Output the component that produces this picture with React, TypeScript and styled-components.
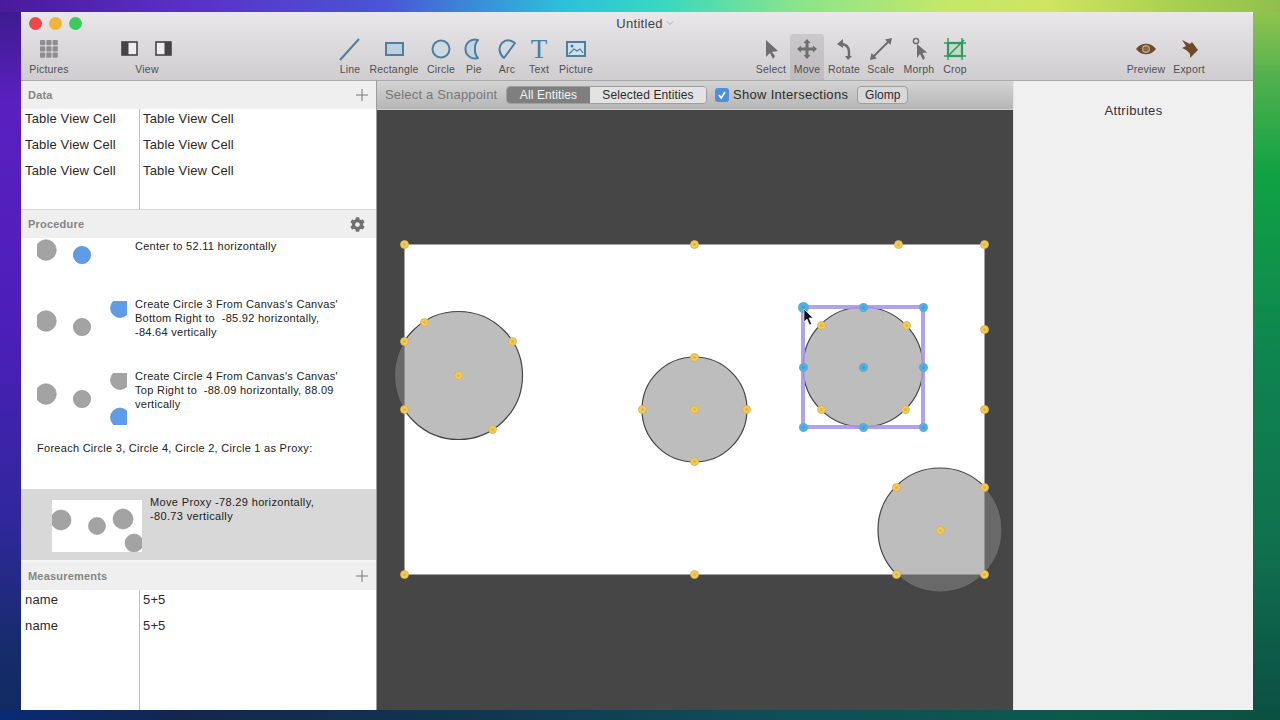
import React from "react";
import styled, { createGlobalStyle } from "styled-components";
import { FaCog } from "react-icons/fa";

const Global = createGlobalStyle`
  html, body { margin: 0; padding: 0; width: 1280px; height: 720px; overflow: hidden; }
  body { font-family: "Liberation Sans", Arial, sans-serif; }
`;

const Desktop = styled.div`
  width: 1280px;
  height: 720px;
  box-sizing: border-box;
  padding: 12px 27px 10px 21px;
  background:
    linear-gradient(90deg, #4a1a9c 0%, #5a30c8 15%, #4a55d6 30%, #2cc0dc 44%, #3ad8c0 52%, #88e48c 62%, #c4e868 74%, #d0e460 82%, #a8d050 92%, #90c04c 100%) top / 100% 12px no-repeat,
    linear-gradient(90deg, #0a2a78 0%, #14264e 14%, #12344e 36%, #0e4c58 58%, #0c5a4c 85%, #0a5040 100%) bottom / 100% 10px no-repeat,
    linear-gradient(180deg, #3a1a88 0%, #5a20c0 14%, #4c1eba 45%, #30279c 72%, #162c6c 90%, #0f2a60 100%) left / 21px 100% no-repeat,
    linear-gradient(180deg, #9cc84e 0%, #50b04e 11%, #10a244 24%, #0e8450 50%, #10704e 76%, #0b4e44 100%) right / 27px 100% no-repeat;
`;

const Window = styled.div`
  height: 100%;
  display: flex;
  flex-direction: column;
  border-radius: 5px 5px 3px 3px;
  overflow: hidden;
  background: #f0f0f0;
`;

const Chrome = styled.div`
  height: 68px;
  flex: none;
  display: flex;
  flex-direction: column;
  background: linear-gradient(180deg, #e9e7e9 0%, #dddbdd 45%, #cfcdcf 100%);
  border-bottom: 1px solid #a9a9a9;
`;

const TitleRow = styled.div`
  height: 22px;
  flex: none;
  display: flex;
  align-items: center;
  padding-left: 8px;
`;

const Light = styled.span<{ $c: string }>`
  width: 13px;
  height: 13px;
  margin-right: 7px;
  border-radius: 50%;
  background: ${(p) => p.$c};
`;

const Title = styled.div`
  flex: 1;
  display: flex;
  justify-content: center;
  align-items: center;
  gap: 3px;
  font-size: 13px;
  color: #444;
  padding-right: 52px;
  box-sizing: border-box;
  letter-spacing: 0.3px;
`;

const ToolRow = styled.div`
  flex: 1;
  display: flex;
  align-items: stretch;
`;

const Tool = styled.div<{ $w: number; $on?: boolean; $ml?: number }>`
  width: ${(p) => p.$w}px;
  margin-left: ${(p) => p.$ml ?? 0}px;
  flex: none;
  display: flex;
  flex-direction: column;
  align-items: center;
  background: ${(p) => (p.$on ? "rgba(120,120,120,.2)" : "transparent")};
  border-radius: 3px 3px 0 0;
`;

const IconSlot = styled.div`
  height: 30px;
  display: flex;
  align-items: center;
  justify-content: center;
  gap: 16px;
`;

const ToolLabel = styled.div`
  font-size: 10.5px;
  line-height: 12px;
  color: #505050;
  white-space: nowrap;
  letter-spacing: 0.2px;
  margin-top: -1px;
`;

const TextGlyph = styled.span`
  font-family: "Liberation Serif", serif;
  font-size: 27px;
  line-height: 30px;
  color: #4d7f9f;
`;

const Body = styled.div`
  flex: 1;
  display: flex;
  min-height: 0;
`;

const Sidebar = styled.div`
  width: 355px;
  flex: none;
  display: flex;
  flex-direction: column;
  background: #fff;
  border-right: 1px solid #9c9c9c;
`;

const SectionHead = styled.div`
  height: 28px;
  flex: none;
  display: flex;
  align-items: center;
  justify-content: space-between;
  box-sizing: border-box;
  padding: 0 8px 0 7px;
  background: #efefef;
  font-size: 11px;
  font-weight: bold;
  color: #858585;
  letter-spacing: 0.2px;
`;

const Plus = styled.svg`
  width: 12px;
  height: 12px;
`;

const Gear = styled(FaCog)`
  margin-right: 3px;
`;

const CellTable = styled.div<{ $h: number }>`
  height: ${(p) => p.$h}px;
  flex: none;
  display: grid;
  grid-template-columns: 118px 1fr;
  grid-auto-rows: 26px;
  align-content: start;
  background: linear-gradient(#bdbdbd, #bdbdbd) 118px 0 / 1px 100% no-repeat #fff;
  border-bottom: ${(p) => (p.$h < 110 ? "1px solid #d6d6d6" : "none")};
`;

const Cell = styled.div`
  font-size: 13px;
  line-height: 20px;
  color: #2a2a2a;
  letter-spacing: 0.15px;
  padding-left: 4px;
`;

const ProcList = styled.div`
  height: 251px;
  flex: none;
  overflow: hidden;
  background: #fff;
`;

const ProcInner = styled.div`
  margin-top: -28px;
`;

const StepRow = styled.div`
  height: 72px;
  display: flex;
  align-items: center;
  padding-left: 16px;
  box-sizing: border-box;
`;

const Thumb = styled.svg<{ $white?: boolean }>`
  flex: none;
  width: 90px;
  height: 52px;
  background: ${(p) => (p.$white ? "#fff" : "transparent")};
  align-self: flex-start;
`;

const RowThumb = styled(Thumb)`
  margin-top: 19px;
`;

const StepText = styled.div`
  margin-left: 8px;
  width: 218px;
  font-size: 11px;
  line-height: 14px;
  letter-spacing: 0.28px;
  color: #222;
  white-space: pre-wrap;
`;

const ForeachRow = styled.div`
  height: 63px;
  padding: 15px 0 0 16px;
  box-sizing: border-box;
  font-size: 11px;
  line-height: 14px;
  letter-spacing: 0.28px;
  color: #222;
`;

const SelectedRow = styled.div`
  height: 71px;
  flex: none;
  display: flex;
  padding: 11px 0 0 31px;
  box-sizing: border-box;
  background: #d8d8d8;
  & ${StepText} { margin-top: -5px; width: 190px; letter-spacing: 0.35px; }
`;

const Divider = styled.div`
  height: 2px;
  flex: none;
  background: #f6f6f6;
`;

const Stage = styled.div`
  flex: 1;
  min-width: 0;
  display: flex;
  flex-direction: column;
`;

const SnapBar = styled.div`
  height: 29px;
  flex: none;
  display: flex;
  align-items: center;
  padding: 0 0 1px 8px;
  box-sizing: border-box;
  background: linear-gradient(180deg, #d4d4d4, #b6b6b6);
  font-size: 13px;
  border-bottom: 1px solid #cfcfcf;
`;

const SnapLabel = styled.span`
  color: #787878;
  width: 121px;
  flex: none;
  letter-spacing: 0.18px;
  white-space: nowrap;
`;

const Segments = styled.div`
  display: flex;
  height: 18px;
  border-radius: 4px;
  overflow: hidden;
  border: 1px solid #9f9f9f;
  box-sizing: border-box;
`;

const Segment = styled.div<{ $on?: boolean; $w: number }>`
  width: ${(p) => p.$w}px;
  text-align: center;
  font-size: 12px;
  line-height: 16px;
  letter-spacing: 0.12px;
  background: ${(p) => (p.$on ? "#7f7f7f" : "#e3e3e3")};
  color: ${(p) => (p.$on ? "#f4f4f4" : "#2c2c2c")};
`;

const Check = styled.div`
  width: 14px;
  height: 14px;
  margin-left: 8px;
  border-radius: 3px;
  background: #4a90dc;
  display: flex;
  align-items: center;
  justify-content: center;
`;

const CheckLabel = styled.span`
  margin-left: 4px;
  color: #2c2c2c;
  letter-spacing: 0.3px;
  white-space: nowrap;
`;

const GlompButton = styled.div`
  margin-left: 9px;
  width: 51px;
  height: 18px;
  box-sizing: border-box;
  border: 1px solid #9f9f9f;
  border-radius: 4px;
  background: #d8d8d8;
  text-align: center;
  font-size: 12px;
  line-height: 16px;
  color: #2c2c2c;
`;

const CanvasArea = styled.div`
  flex: 1;
  min-height: 0;
  background: #464646;
`;

const CanvasSvg = styled.svg`
  display: block;
  width: 635px;
  height: 600px;
`;

const Inspector = styled.div`
  width: 240px;
  flex: none;
  background: #f0f0f0;
  border-left: 1px solid #e4e4e4;
  box-sizing: border-box;
  padding-top: 22px;
  text-align: center;
  font-size: 13px;
  color: #333;
  letter-spacing: 0.3px;
`;

const BLUE = "#4d7f9f";
const GRAY_I = "#6e6e6e";
const BROWN = "#6f4a2a";

const Ico: React.FC<{ w?: number; h?: number; children: React.ReactNode }> = ({ w = 28, h = 28, children }) => (
  <svg width={w} height={h} viewBox={`0 0 ${w} ${h}`}>{children}</svg>
);

const icons: Record<string, React.ReactNode> = {
  Line: <Ico><path d="M4 25 L23 4" stroke={BLUE} strokeWidth="2" fill="none" /></Ico>,
  Rectangle: <Ico><rect x="6" y="8" width="17" height="12" fill="#bcd0de" stroke={BLUE} strokeWidth="2" /></Ico>,
  Circle: <Ico><circle cx="14" cy="14" r="8.5" fill="#cfd9e1" stroke={BLUE} strokeWidth="2" /></Ico>,
  Pie: <Ico><path d="M18 5 A9.5 9.5 0 1 0 18 23 A12 12 0 0 1 15 14 A12 12 0 0 1 18 5 Z" fill="#c4d4df" stroke={BLUE} strokeWidth="2" strokeLinejoin="round" /></Ico>,
  Arc: <Ico><path d="M11 23 C6 19 5 12 9 8 C13 4 18 5 22 8 Z" fill="#d0dbe3" stroke={BLUE} strokeWidth="2" strokeLinejoin="round" /></Ico>,
  Picture: <Ico><rect x="5" y="7" width="18" height="14" fill="#cfe0ea" stroke={BLUE} strokeWidth="2" /><path d="M7 19 L12 14 L15 16 L18 14 L21 18" stroke={BLUE} strokeWidth="1.2" fill="none" /><circle cx="10" cy="11" r="1.5" fill={BLUE} /></Ico>,
  Select: <Ico><path d="M9 5 L9 22 L13 18 L16 24 L18 21 L15 17 L21 16 Z" fill={GRAY_I} /></Ico>,
  Move: <Ico><path d="M14 4 L17.5 8 L15.5 8 L15.5 12.5 L20 12.5 L20 10.5 L24 14 L20 17.5 L20 15.5 L15.5 15.5 L15.5 20 L17.5 20 L14 24 L10.5 20 L12.5 20 L12.5 15.5 L8 15.5 L8 17.5 L4 14 L8 10.5 L8 12.5 L12.5 12.5 L12.5 8 L10.5 8 Z" fill={GRAY_I} /></Ico>,
  Rotate: <Ico><path d="M10 9 C16 9 19 12 19 17 L19 22" fill="none" stroke={GRAY_I} strokeWidth="2.4" /><path d="M13 4 L7 9 L13 13 Z" fill={GRAY_I} /><path d="M15 21 L22 21 L18 25 Z" fill={GRAY_I} /></Ico>,
  Scale: <Ico><path d="M6 22 L22 6" stroke={GRAY_I} strokeWidth="2" /><path d="M3 25 L4.5 18 L10 23.5 Z M25 3 L23.5 10 L18 4.5 Z" fill={GRAY_I} /></Ico>,
  Morph: <Ico><circle cx="11" cy="6" r="2.6" fill="none" stroke={GRAY_I} strokeWidth="1.5" /><path d="M12 9 L12 23 L15 19 L18 25 L20 23 L17.5 18 L22 17.5 Z" fill={GRAY_I} /></Ico>,
  Crop: <Ico><rect x="7" y="8" width="14" height="13" fill="#c2d8c8" stroke="#2f9a5e" strokeWidth="2.2" /><path d="M3 8 L25 8 M7 3 L7 25 M3 21 L25 21 M21 3 L21 25" stroke="#2f9a5e" strokeWidth="1.4" /><path d="M7 21 L23 5" stroke="#2f9a5e" strokeWidth="1.6" /></Ico>,
  Preview: <Ico><path d="M4 14 C9 7 19 7 24 14 C19 21 9 21 4 14 Z" fill={BROWN} /><circle cx="14" cy="14" r="3.4" fill="#8a6a48" stroke="#b9a88f" strokeWidth="1.2" /></Ico>,
  Export: <Ico><path d="M7 5 L15 9 L17 7 L23 15 L15 23 L15 19 C13 16 10 14 7 13 L11 11 Z" fill={BROWN} /></Ico>,
};

type T = { n: string; w: number; ml?: number; on?: boolean };
const tools: T[] = [
  { n: "Line", w: 38, ml: 150 },
  { n: "Rectangle", w: 50 },
  { n: "Circle", w: 44 },
  { n: "Pie", w: 22 },
  { n: "Arc", w: 44 },
  { n: "Text", w: 20 },
  { n: "Picture", w: 54 },
];
const tools2: T[] = [
  { n: "Select", w: 38, ml: 149 },
  { n: "Move", w: 34, on: true },
  { n: "Rotate", w: 40 },
  { n: "Scale", w: 34 },
  { n: "Morph", w: 42 },
  { n: "Crop", w: 30 },
  { n: "Preview", w: 44, ml: 154 },
  { n: "Export", w: 42 },
];

const ToolItem: React.FC<T> = ({ n, w, ml, on }) => (
  <Tool $w={w} $ml={ml} $on={on}>
    <IconSlot>{n === "Text" ? <TextGlyph>T</TextGlyph> : icons[n]}</IconSlot>
    <ToolLabel>{n}</ToolLabel>
  </Tool>
);

const PlusIcon = () => (
  <Plus viewBox="0 0 12 12"><path d="M6 0 V12 M0 6 H12" stroke="#777" strokeWidth="1" /></Plus>
);

type Dot = [number, number, number, boolean?];
const ThumbDots: React.FC<{ dots: Dot[] }> = ({ dots }) => (
  <>
    {dots.map(([x, y, r, blue], i) => (
      <circle key={i} cx={x} cy={y} r={r} fill={blue ? "#5e9de6" : "#a3a3a3"} stroke={blue ? "#5588c8" : "#939393"} strokeWidth="0.6" />
    ))}
  </>
);

const steps: { text: string; dots: Dot[] }[] = [
  { text: "Center to 52.11 horizontally", dots: [[9, 21, 10.3], [45, 26, 8.7, true]] },
  {
    text: "Create Circle 3 From Canvas's Canvas'\nBottom Right to  -85.92 horizontally,\n-84.64 vertically",
    dots: [[9, 20, 10.3], [45, 26, 8.7], [83, 7, 9.5, true]],
  },
  {
    text: "Create Circle 4 From Canvas's Canvas'\nTop Right to  -88.09 horizontally, 88.09\nvertically",
    dots: [[9, 21, 10.3], [45, 26, 8.7], [83, 7, 9.5], [83, 44.5, 9.5, true]],
  },
];

const Y = ({ x, y }: { x: number; y: number }) => (
  <g>
    <circle cx={x + 0.5} cy={y + 0.5} r="4" fill="#f0cc60" stroke="#d8ae44" strokeWidth="0.8" />
    <circle cx={x + 0.5} cy={y + 0.5} r="1.6" fill="#e6b440" />
  </g>
);
const B = ({ x, y, r = 4.5 }: { x: number; y: number; r?: number }) => (
  <g>
    <circle cx={x + 0.5} cy={y + 0.5} r={r} fill="#56aede" />
    <circle cx={x + 0.5} cy={y + 0.5} r="1.5" fill="#4a9cc8" />
  </g>
);
const CIRC = { fill: "rgba(135,135,135,.55)", stroke: "#444", strokeWidth: 1.2 };

const yellow: [number, number][] = [
  [404, 244], [694, 244], [898, 244], [984, 244], [984, 329], [984, 409], [404, 574], [694, 574],
  [896, 574], [984, 574], [404, 341], [424, 322], [512, 341], [458, 375], [404, 409], [492, 429],
  [694, 357], [642, 409], [694, 409], [746, 409], [694, 461],
  [821, 325], [906, 325], [821, 409], [905, 409],
  [896, 487], [984, 487], [940, 530],
];
const blue: [number, number][] = [
  [863, 307], [923, 307], [803, 367], [863, 367], [923, 367], [803, 427], [863, 427], [923, 427],
];

export default function App() {
  return (
    <Desktop>
      <Global />
      <Window>
        <Chrome>
          <TitleRow>
            <Light $c="#e8484e" />
            <Light $c="#f0b43c" />
            <Light $c="#3cc85a" />
            <Title>
              Untitled
              <svg width="8" height="6" viewBox="0 0 8 6"><path d="M1 1.5 L4 4.5 L7 1.5" stroke="#b0b0b0" strokeWidth="1" fill="none" /></svg>
            </Title>
          </TitleRow>
          <ToolRow>
            <Tool $w={56}>
              <IconSlot>
                <Ico w={18} h={18}>
                  {[0, 6.3, 12.6].flatMap((y) =>
                    [0, 6.3, 12.6].map((x) => <rect key={`${x}-${y}`} x={x} y={y} width="5.2" height="5.2" rx="0.8" fill="#8e8e8e" />)
                  )}
                </Ico>
              </IconSlot>
              <ToolLabel>Pictures</ToolLabel>
            </Tool>
            <Tool $w={68} $ml={36}>
              <IconSlot>
                <Ico w={18} h={16}>
                  <rect x="1" y="1" width="15" height="13" fill="#eee" stroke="#444" strokeWidth="1.6" />
                  <rect x="1" y="1" width="6.5" height="13" fill="#444" />
                </Ico>
                <Ico w={18} h={16}>
                  <rect x="1" y="1" width="15" height="13" fill="#eee" stroke="#444" strokeWidth="1.6" />
                  <rect x="9.5" y="1" width="6.5" height="13" fill="#444" />
                </Ico>
              </IconSlot>
              <ToolLabel>View</ToolLabel>
            </Tool>
            {[...tools, ...tools2].map((t) => <ToolItem key={t.n} {...t} />)}
          </ToolRow>
        </Chrome>
        <Body>
          <Sidebar>
            <SectionHead>Data<PlusIcon /></SectionHead>
            <CellTable $h={100}>
              {[0, 1, 2].flatMap((i) => [
                <Cell key={`a${i}`}>Table View Cell</Cell>,
                <Cell key={`b${i}`}>Table View Cell</Cell>,
              ])}
            </CellTable>
            <SectionHead>Procedure<Gear size={15} color="#707070" /></SectionHead>
            <ProcList>
              <ProcInner>
                {steps.map((s, i) => (
                  <StepRow key={i}>
                    <RowThumb viewBox="0 0 90 52"><ThumbDots dots={s.dots} /></RowThumb>
                    <StepText>{s.text}</StepText>
                  </StepRow>
                ))}
                <ForeachRow>Foreach Circle 3, Circle 4, Circle 2, Circle 1 as Proxy:</ForeachRow>
              </ProcInner>
            </ProcList>
            <SelectedRow>
              <Thumb $white viewBox="0 0 90 52">
                <ThumbDots dots={[[9, 20, 10], [45, 26, 8.5], [71, 19, 10], [82, 43, 9]]} />
              </Thumb>
              <StepText>{"Move Proxy -78.29 horizontally,\n-80.73 vertically"}</StepText>
            </SelectedRow>
            <Divider />
            <SectionHead>Measurements<PlusIcon /></SectionHead>
            <CellTable $h={120}>
              {[0, 1].flatMap((i) => [
                <Cell key={`n${i}`}>name</Cell>,
                <Cell key={`v${i}`}>5+5</Cell>,
              ])}
            </CellTable>
          </Sidebar>
          <Stage>
            <SnapBar>
              <SnapLabel>Select a Snappoint</SnapLabel>
              <Segments>
                <Segment $on $w={83}>All Entities</Segment>
                <Segment $w={116}>Selected Entities</Segment>
              </Segments>
              <Check>
                <svg width="10" height="10" viewBox="0 0 10 10"><path d="M2 5 L4.2 8 L8 2" stroke="#fff" strokeWidth="1.6" fill="none" /></svg>
              </Check>
              <CheckLabel>Show Intersections</CheckLabel>
              <GlompButton>Glomp</GlompButton>
            </SnapBar>
            <CanvasArea>
              <CanvasSvg viewBox="377 110 635 600">
                <rect x="404.5" y="244.5" width="580" height="330" fill="#fff" />
                <circle cx="458.5" cy="375.5" r="64" {...CIRC} />
                <circle cx="694.5" cy="409.5" r="52.5" {...CIRC} />
                <circle cx="863" cy="367" r="60" {...CIRC} />
                <circle cx="940" cy="530" r="62" {...CIRC} />
                <rect x="803" y="307" width="120" height="120" fill="none" stroke="#a999e8" strokeWidth="4" opacity="0.9" />
                {yellow.map(([x, y]) => <Y key={`${x}-${y}`} x={x} y={y} />)}
                {blue.map(([x, y]) => <B key={`${x}-${y}`} x={x} y={y} />)}
                <B x={803} y={307} r={5.5} />
                <path d="M804 309 L804 322 L807 319 L809.5 325 L811.5 324 L809 318 L813 318 Z" fill="#111" stroke="#fff" strokeWidth="0.6" />
              </CanvasSvg>
            </CanvasArea>
          </Stage>
          <Inspector>Attributes</Inspector>
        </Body>
      </Window>
    </Desktop>
  );
}
